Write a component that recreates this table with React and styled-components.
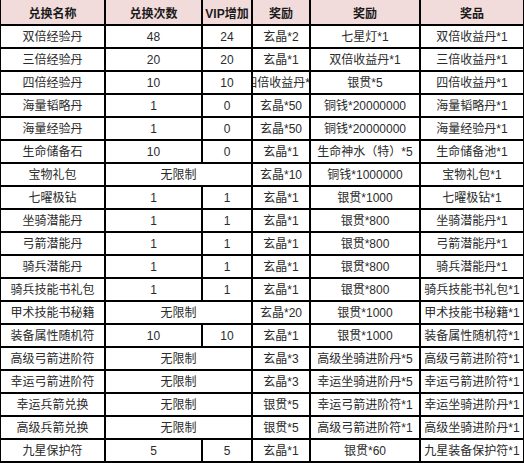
import styled, { createGlobalStyle } from "styled-components";

const GlobalStyle = createGlobalStyle`
	html, body {
		margin: 0;
		padding: 0;
		background: #fff;
	}
	body {
		font-family: "Liberation Sans", "Noto Sans CJK SC", sans-serif;
		overflow: hidden;
	}
`;

const Table = styled.table`
	border-collapse: collapse;
	table-layout: fixed;
	width: 524px;
	margin-top: -2px;
	margin-left: -1px;
	font-size: 12px;
	color: #2b2b2b;
`;

const HeadRow = styled.tr`
	height: 26px;
	background: #f2dcdb;
`;

const Row = styled.tr`
	height: 23px;
`;

const Th = styled.th`
	border: 2px solid #000;
	padding: 0;
	font-weight: 700;
	color: #1a1a1a;
	white-space: nowrap;
	overflow: hidden;
`;

const Td = styled.td`
	border: 2px solid #000;
	padding: 0;
`;

const Cell = styled.div`
	display: flex;
	justify-content: center;
	align-items: center;
	white-space: nowrap;
	overflow: hidden;
	line-height: 18px;
`;

const columns = [
	{ title: "兑换名称", width: 105 },
	{ title: "兑换次数", width: 97 },
	{ title: "VIP增加", width: 50 },
	{ title: "奖励", width: 58 },
	{ title: "奖励", width: 110 },
	{ title: "奖品", width: 104 },
];

const UNLIMITED = null;

const rows = [
	["双倍经验丹", "48", "24", "玄晶*2", "七星灯*1", "双倍收益丹*1"],
	["三倍经验丹", "20", "20", "玄晶*1", "双倍收益丹*1", "三倍收益丹*1"],
	["四倍经验丹", "10", "10", "四倍收益丹*1", "银贯*5", "四倍收益丹*1"],
	["海量韬略丹", "1", "0", "玄晶*50", "铜钱*20000000", "海量韬略丹*1"],
	["海量经验丹", "1", "0", "玄晶*50", "铜钱*20000000", "海量经验丹*1"],
	["生命储备石", "10", "0", "玄晶*1", "生命神水（特）*5", "生命储备池*1"],
	["宝物礼包", UNLIMITED, "玄晶*10", "铜钱*1000000", "宝物礼包*1"],
	["七曜极钻", "1", "1", "玄晶*1", "银贯*1000", "七曜极钻*1"],
	["坐骑潜能丹", "1", "1", "玄晶*1", "银贯*800", "坐骑潜能丹*1"],
	["弓箭潜能丹", "1", "1", "玄晶*1", "银贯*800", "弓箭潜能丹*1"],
	["骑兵潜能丹", "1", "1", "玄晶*1", "银贯*800", "骑兵潜能丹*1"],
	["骑兵技能书礼包", "1", "1", "玄晶*1", "银贯*800", "骑兵技能书礼包*1"],
	["甲术技能书秘籍", UNLIMITED, "玄晶*20", "银贯*1000", "甲术技能书秘籍*1"],
	["装备属性随机符", "10", "10", "玄晶*1", "银贯*1000", "装备属性随机符*1"],
	["高级弓箭进阶符", UNLIMITED, "玄晶*3", "高级坐骑进阶丹*5", "高级弓箭进阶符*1"],
	["幸运弓箭进阶符", UNLIMITED, "玄晶*3", "幸运坐骑进阶丹*5", "幸运弓箭进阶符*1"],
	["幸运兵箭兑换", UNLIMITED, "银贯*5", "幸运弓箭进阶符*1", "幸运坐骑进阶丹*1"],
	["高级兵箭兑换", UNLIMITED, "银贯*5", "高级弓箭进阶符*1", "高级坐骑进阶丹*1"],
	["九星保护符", "5", "5", "玄晶*1", "银贯*60", "九星装备保护符*1"],
];

function App() {
	return (
		<>
			<GlobalStyle />
			<Table>
				<colgroup>
					{columns.map((col, i) => (
						<col key={i} style={{ width: col.width }} />
					))}
				</colgroup>
				<thead>
					<HeadRow>
						{columns.map((col, i) => (
							<Th key={i}>{col.title}</Th>
						))}
					</HeadRow>
				</thead>
				<tbody>
					{rows.map((row) => (
						<Row key={row[0]}>
							{row.map((value, i) =>
								value === UNLIMITED ? (
									<Td key={i} colSpan={2}>
										<Cell>无限制</Cell>
									</Td>
								) : (
									<Td key={i}>
										<Cell>{value}</Cell>
									</Td>
								)
							)}
						</Row>
					))}
				</tbody>
			</Table>
		</>
	);
}

export default App;
